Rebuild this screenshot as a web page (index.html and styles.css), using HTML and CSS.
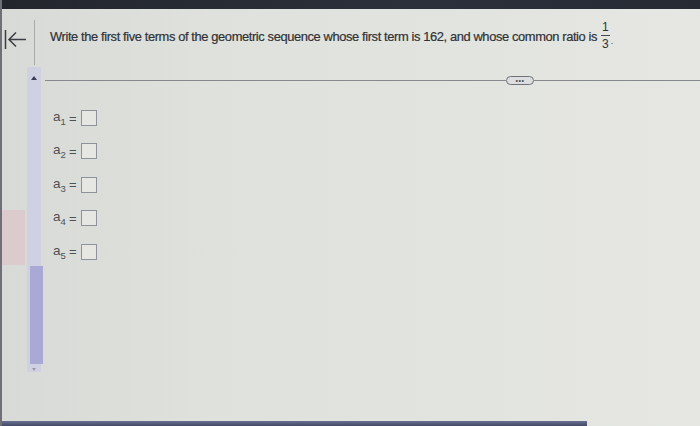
FILE: index.html
```html
<!DOCTYPE html>
<html>
<head>
<meta charset="utf-8">
<link rel="stylesheet" href="styles.css">
</head>
<body>
<div class="screen">
  <div class="topbar"></div>
  <div class="header">
    <div class="back">
      <svg width="24" height="20" viewBox="0 0 24 20"><path d="M2.5 0 V19 M23 9.5 H6 M13 2.5 L6 9.5 L13 16.5" fill="none" stroke="#3a3d42" stroke-width="1.5"/></svg>
    </div>
    <div class="question">
      Write the first five terms of the geometric sequence whose first term is 162, and whose common ratio is<span class="frac"><span class="num">1</span><span class="den">3</span></span><span class="dot">.</span>
    </div>
  </div>
  <div class="main">
    <div class="side">
      <div class="marker"><div class="pink"></div></div>
      <div class="track">
        <div class="up"></div>
        <div class="thumb"></div>
        <div class="down"></div>
      </div>
    </div>
    <div class="content">
      <div class="divider">
        <span class="line"></span>
        <span class="pill">&bull;&bull;&bull;</span>
        <span class="line"></span>
      </div>
      <div class="terms">
        <div class="term"><span class="a">a<sub>1</sub></span><span class="eq">=</span><span class="box"></span></div>
        <div class="term"><span class="a">a<sub>2</sub></span><span class="eq">=</span><span class="box"></span></div>
        <div class="term"><span class="a">a<sub>3</sub></span><span class="eq">=</span><span class="box"></span></div>
        <div class="term"><span class="a">a<sub>4</sub></span><span class="eq">=</span><span class="box"></span></div>
        <div class="term"><span class="a">a<sub>5</sub></span><span class="eq">=</span><span class="box"></span></div>
      </div>
    </div>
  </div>
  <div class="bottom"><div class="dark"></div></div>
</div>
</body>
</html>
```
FILE: styles.css
```css
* { box-sizing: border-box; }
html, body { margin: 0; padding: 0; }
body {
  width: 700px; height: 426px; overflow: hidden;
  font-family: "Liberation Sans", Arial, sans-serif;
  color: #35383d;
}
.screen {
  width: 700px; height: 426px;
  display: flex; flex-direction: column;
  background: linear-gradient(90deg, #d8dad7 0%, #dfe1dc 30%, #e2e4df 70%, #e6e7e3 100%);
  border-left: 2px solid #6e7075;
}
.topbar { height: 9px; background: linear-gradient(90deg, #23262d, #2b303a 60%, #262a33); flex: none; }
.header { height: 58px; display: flex; flex: none; }
.back {
  width: 33px; height: 45px; margin-top: 11px;
  border-right: 1px solid #a9abab;
  padding: 10px 0 0 1px;
}
.back svg { display: block; }
.question {
  padding: 14px 0 0 15px;
  font-size: 12.9px; letter-spacing: -0.39px;
  color: #2f3236;
  white-space: nowrap;
  -webkit-text-stroke: 0.2px #2f3236;
  display: flex; align-items: center; height: 40px;
}
.frac {
  display: inline-flex; flex-direction: column; align-items: center;
  font-size: 12px; line-height: 11px;
  margin-left: 4px;
  letter-spacing: 0;
  -webkit-text-stroke: 0;
}
.frac .num { border-bottom: 1px solid #44474c; padding: 0 1px 2px; }
.frac .den { padding-top: 3px; }
.dot { font-size: 9px; align-self: center; margin-top: 9px; margin-left: 1px; color: #777; }
.main { flex: 1; display: flex; }
.side { width: 43px; display: flex; flex: none; }
.marker { width: 23px; padding-top: 143px; }
.pink { height: 55px; background: #dccbcc; }
.track {
  width: 14px; margin-left: 2px;
  background: #cfd0e2;
  display: flex; flex-direction: column; align-items: center;
  height: 305px;
}
.up {
  margin-top: 9px; width: 0; height: 0;
  border-left: 3px solid transparent; border-right: 3px solid transparent;
  border-bottom: 4px solid #3a3d55;
}
.thumb { margin-top: 186px; width: 13px; height: 98px; background: #aaa9d6; margin-left: 4px; }
.down {
  margin-top: 4px; width: 0; height: 0;
  border-left: 2px solid transparent; border-right: 2px solid transparent;
  border-top: 3px solid #9a9aa8;
}
.content { flex: 1; display: flex; flex-direction: column; }
.divider { display: flex; align-items: center; height: 10px; margin-top: 8px; }
.divider .line { height: 1px; background: #85888c; }
.divider .line:first-child { width: 461px; }
.divider .line:last-child { flex: 1; }
.pill {
  width: 28px; height: 9px; border: 1px solid #6e7278; border-radius: 5px;
  font-size: 7px; line-height: 7px; text-align: center; color: #4a4d55;
  letter-spacing: 0.5px;
  background: #dcdee0;
}
.terms { padding: 25px 0 0 8px; display: flex; flex-direction: column; gap: 17.4px; }
.term { display: flex; align-items: center; height: 16px; }
.a { font-size: 13.5px; color: #4e5156; width: 17px; }
.a sub { font-size: 9.5px; vertical-align: -4px; }
.eq { font-size: 13px; color: #4e5156; margin-left: -1px; width: 12px; }
.box { width: 16px; height: 16px; border: 1.5px solid #8d929b; background: #e6e7e3; }
.bottom { height: 5px; flex: none; display: flex; }
.dark { width: 585px; background: linear-gradient(180deg, #6a7090, #424866); }
```
